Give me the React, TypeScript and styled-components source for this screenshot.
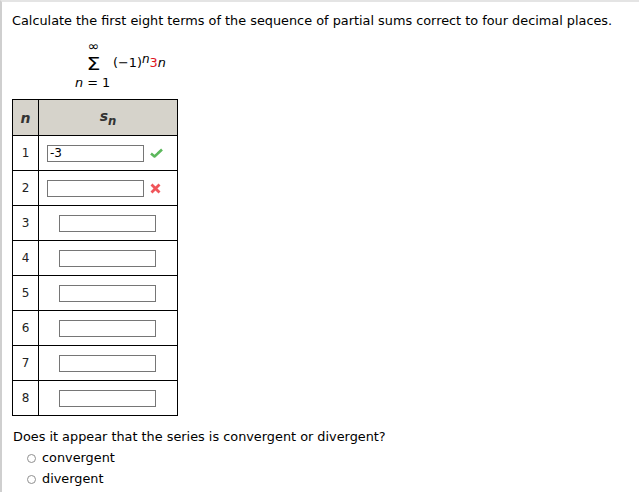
import styled, { createGlobalStyle } from "styled-components";

const GlobalStyle = createGlobalStyle`
    html, body {
        margin: 0;
        padding: 0;
        background: #fff;
    }
    body {
        font-family: "DejaVu Sans", Verdana, sans-serif;
        font-size: 12.85px;
        color: #000;
    }
`;

const Page = styled.div`
    border-top: 2px solid #e4e4e4;
    border-left: 2px solid #cfcfcf;
    height: 492px;
    box-sizing: border-box;
    padding: 11px 0 0 10px;
`;

const Prompt = styled.p`
    margin: 0;
    line-height: 16px;
`;

const SumBlock = styled.div`
    display: grid;
    grid-template-columns: 10px 17px auto;
    margin: 12px 0 0 63px;
    width: max-content;
`;

const Infinity = styled.span`
    grid-column: 2;
    grid-row: 1;
    justify-self: center;
    line-height: 11px;
    font-size: 14px;
    margin-bottom: 4px;
`;

const Sigma = styled.span`
    grid-column: 2;
    grid-row: 2;
    justify-self: center;
    align-self: center;
    font-size: 17px;
    line-height: 16px;
    transform: scaleX(1.3);
`;

const Term = styled.span`
    grid-column: 3;
    grid-row: 2;
    align-self: start;
    margin-left: 11px;
    font-size: 12.85px;
    line-height: 14px;
    white-space: nowrap;
`;

const Sup = styled.sup`
    font-style: italic;
    font-size: 12px;
    vertical-align: 4px;
    line-height: 0;
`;

const Red = styled.span`
    color: #e0141e;
`;

const Ital = styled.i`
    font-style: italic;
`;

const Lower = styled.span`
    grid-column: 1 / -1;
    grid-row: 3;
    justify-self: start;
    margin-top: 4px;
    font-size: 12.85px;
    line-height: 13px;
    white-space: nowrap;
`;

const Table = styled.table`
    border-collapse: collapse;
    margin-top: 10px;
    width: 166px;
`;

const HeadCell = styled.th<{ $w: number }>`
    background: #d6d3cb;
    border: 1px solid #000;
    height: 35px;
    width: ${({ $w }) => $w}px;
    padding: 0;
    font-weight: bold;
    font-style: italic;
    font-size: 14px;
    color: #333;
`;

const NumCell = styled.td`
    border: 1px solid #000;
    height: 34px;
    padding: 0;
    text-align: center;
    font-size: 12px;
    color: #222;
`;

const ValueCell = styled.td`
    border: 1px solid #000;
    height: 34px;
    padding: 0;
`;

const ValueWrap = styled.div<{ $marked: boolean }>`
    display: flex;
    align-items: center;
    gap: 6px;
    padding-left: ${({ $marked }) => ($marked ? 8 : 0)}px;
    justify-content: ${({ $marked }) => ($marked ? "flex-start" : "center")};
`;

const Field = styled.input`
    width: 97px;
    height: 17px;
    box-sizing: border-box;
    border: 1px solid #767676;
    padding: 0 2px;
    font-family: "DejaVu Sans", Verdana, sans-serif;
    font-size: 12px;
    outline: none;
    background: #fff;
`;

const Question = styled.p`
    margin: 13px 0 0 1px;
    line-height: 16px;
`;

const Options = styled.div`
    display: flex;
    flex-direction: column;
    gap: 5px;
    margin: 5px 0 0 15px;
`;

const Option = styled.label`
    display: flex;
    align-items: center;
    gap: 6px;
    line-height: 16px;
`;

const Radio = styled.span`
    width: 9px;
    height: 9px;
    border-radius: 50%;
    border: 1px solid #909090;
    box-sizing: border-box;
    background: #fff;
`;

function Check() {
    return (
        <svg width="13" height="10" viewBox="0 0 13 10">
            <path
                d="M1 5.5 L4.5 8.5 L12 1.5"
                fill="none"
                stroke="#5cb85c"
                strokeWidth="2.6"
                strokeLinejoin="round"
            />
        </svg>
    );
}

function Cross() {
    return (
        <svg width="11" height="11" viewBox="0 0 11 11">
            <path
                d="M1.5 1.5 L9.5 9.5 M9.5 1.5 L1.5 9.5"
                stroke="#f0555a"
                strokeWidth="2.8"
            />
        </svg>
    );
}

const rows = [
    { n: 1, value: "-3", mark: "check" },
    { n: 2, value: "", mark: "cross" },
    { n: 3, value: "", mark: "" },
    { n: 4, value: "", mark: "" },
    { n: 5, value: "", mark: "" },
    { n: 6, value: "", mark: "" },
    { n: 7, value: "", mark: "" },
    { n: 8, value: "", mark: "" },
];

export default function App() {
    return (
        <>
            <GlobalStyle />
            <Page>
                <Prompt>
                    Calculate the first eight terms of the sequence of partial
                    sums correct to four decimal places.
                </Prompt>

                <SumBlock>
                    <Infinity>∞</Infinity>
                    <Sigma>Σ</Sigma>
                    <Term>
                        (−1)<Sup>n</Sup>
                        <Red>3</Red>
                        <Ital>n</Ital>
                    </Term>
                    <Lower>
                        <Ital>n</Ital> = 1
                    </Lower>
                </SumBlock>

                <Table>
                    <thead>
                        <tr>
                            <HeadCell $w={26}>n</HeadCell>
                            <HeadCell $w={139}>
                                s<sub>n</sub>
                            </HeadCell>
                        </tr>
                    </thead>
                    <tbody>
                        {rows.map((r) => (
                            <tr key={r.n}>
                                <NumCell>{r.n}</NumCell>
                                <ValueCell>
                                    <ValueWrap $marked={r.mark !== ""}>
                                        <Field defaultValue={r.value} />
                                        {r.mark === "check" && <Check />}
                                        {r.mark === "cross" && <Cross />}
                                    </ValueWrap>
                                </ValueCell>
                            </tr>
                        ))}
                    </tbody>
                </Table>

                <Question>
                    Does it appear that the series is convergent or divergent?
                </Question>
                <Options>
                    <Option>
                        <Radio />
                        convergent
                    </Option>
                    <Option>
                        <Radio />
                        divergent
                    </Option>
                </Options>
            </Page>
        </>
    );
}
